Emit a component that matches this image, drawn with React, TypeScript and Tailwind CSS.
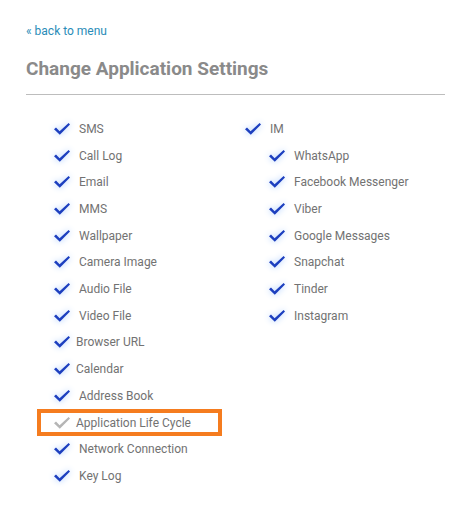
import React from 'react';

type Item = { label: string; tight?: boolean; off?: boolean; highlight?: boolean };

const leftItems: Item[] = [
    { label: 'SMS' },
    { label: 'Call Log' },
    { label: 'Email' },
    { label: 'MMS' },
    { label: 'Wallpaper' },
    { label: 'Camera Image' },
    { label: 'Audio File' },
    { label: 'Video File' },
    { label: 'Browser URL', tight: true },
    { label: 'Calendar', tight: true },
    { label: 'Address Book' },
    { label: 'Application Life Cycle', tight: true, off: true, highlight: true },
    { label: 'Network Connection' },
    { label: 'Key Log' },
];

const imItems = ['WhatsApp', 'Facebook Messenger', 'Viber', 'Google Messages', 'Snapchat', 'Tinder', 'Instagram'];

const Check = ({ off }: { off?: boolean }) => (
    <svg
        viewBox="0 0 18 14"
        className={`w-[18px] h-[14px] shrink-0 ${off ? '' : 'drop-shadow-[0_0_3px_#9cc4ff]'}`}
    >
        <path
            d="M1 7.2 L3 5.6 L6.6 9.2 L15.6 1 L17 2.4 L6.8 12.8 Z"
            fill={off ? '#b5b5b5' : '#1d3fbf'}
        />
    </svg>
);

const Row = ({ item }: { item: Item }) => (
    <div className="relative flex items-center h-[26.7px]">
        <Check off={item.off} />
        <span className={`${item.tight ? 'ml-[5px]' : 'ml-[8px]'} text-[12px] text-[#727272]`}>{item.label}</span>
        {item.highlight && (
            <span className="absolute left-[-16px] top-0 w-[185px] h-[27px] border-[4px] border-[#f57c1f]"></span>
        )}
    </div>
);

export default function App() {
    return (
        <div className="w-[474px] h-[509px] bg-white px-[26px] pt-[23px] font-['Roboto',sans-serif]">
            <a className="block text-[12px] leading-[16px] text-[#2a8cb8]">« back to menu</a>
            <h1 className="mt-[18px] text-[19px] leading-[24px] font-bold text-[#8a8a8a]">Change Application Settings</h1>
            <div className="mt-[13px] w-[419px] h-px bg-[#bdbdbd]"></div>

            <div className="flex pt-[20.6px] pl-[27px]">
                <div className="w-[191px]">
                    {leftItems.map(item => (
                        <Row key={item.label} item={item} />
                    ))}
                </div>
                <div>
                    <Row item={{ label: 'IM' }} />
                    <div className="pl-[24px]">
                        {imItems.map(label => (
                            <Row key={label} item={{ label }} />
                        ))}
                    </div>
                </div>
            </div>
        </div>
    );
}
